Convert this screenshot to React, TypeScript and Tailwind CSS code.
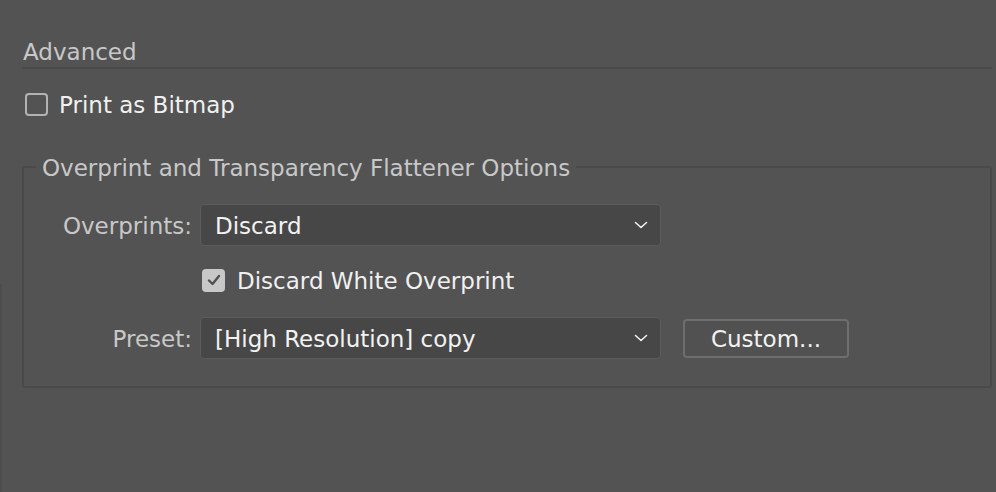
import React from 'react';

const font = { fontFamily: '"DejaVu Sans", "Open Sans", sans-serif' };

function Chevron() {
  return (
    <svg width="14" height="8" viewBox="0 0 14 8" className="shrink-0">
      <path d="M1.5 1.5 L7 6.5 L12.5 1.5" fill="none" stroke="#f2f2f2" strokeWidth="1.6" strokeLinecap="round" strokeLinejoin="round" />
    </svg>
  );
}

function Select({ value }: { value: string }) {
  return (
    <div className="flex h-[42px] w-[461px] items-center justify-between rounded-[4px] border border-[#5c5c5c] bg-[#474747] pl-[14px] pr-[12px] text-[#f2f2f2]">
      <span className="pt-[2px]">{value}</span>
      <Chevron />
    </div>
  );
}

function Checkbox({ checked }: { checked?: boolean }) {
  if (checked) {
    return (
      <div className="flex h-[23px] w-[23px] shrink-0 items-center justify-center rounded-[4px] bg-[#c8c8c8]">
        <svg width="14" height="12" viewBox="0 0 14 12">
          <path d="M2 6.5 L5.5 10 L12 2" fill="none" stroke="#505050" strokeWidth="2.4" strokeLinecap="round" strokeLinejoin="round" />
        </svg>
      </div>
    );
  }
  return <div className="h-[23px] w-[23px] shrink-0 rounded-[4px] border-2 border-[#b3b3b3]" />;
}

export default function App() {
  return (
    <div
      className="relative h-[492px] w-[996px] overflow-hidden bg-[#535353] pl-[22px] pr-[4px] pt-[36px] leading-[28px] text-[23px] text-[#c8c8c8]"
      style={font}
    >
      <div className="pointer-events-none absolute bottom-0 left-0 top-[284px] w-[2px] bg-[#4d4d4d]" />

      <div className="pl-[1px] pt-[2px]">Advanced</div>
      <div className="mt-[1px] h-[2px] bg-[#4a4a4a]" />

      <div className="mt-[20px] flex items-center gap-[11px] pl-[3px] text-[#f0f0f0]">
        <Checkbox />
        <span className="pt-[2px]">Print as Bitmap</span>
      </div>

      <fieldset className="mt-[33px] rounded-[3px] border-2 border-[#4a4a4a] pb-[27px]">
        <legend className="ml-[12px] px-[6px] pt-[2px] text-[#c8c8c8]">Overprint and Transparency Flattener Options</legend>

        <div className="mt-[22px] flex items-center">
          <div className="w-[168px] pt-[2px] text-right text-[#c8c8c8]">Overprints:</div>
          <div className="ml-[8px]">
            <Select value="Discard" />
          </div>
        </div>

        <div className="mt-[19px] flex items-center gap-[12px] pl-[178px] text-[#f0f0f0]">
          <Checkbox checked />
          <span className="pt-[2px]">Discard White Overprint</span>
        </div>

        <div className="mt-[22px] flex items-center">
          <div className="w-[168px] pt-[2px] text-right text-[#c8c8c8]">Preset:</div>
          <div className="ml-[8px]">
            <Select value="[High Resolution] copy" />
          </div>
          <button
            type="button"
            className="ml-[22px] flex h-[39px] w-[166px] items-center justify-center rounded-[4px] border-2 border-[#6e6e6e] bg-[#515151] text-[#f2f2f2]"
          >
            <span className="pt-[2px]">Custom...</span>
          </button>
        </div>
      </fieldset>
    </div>
  );
}
